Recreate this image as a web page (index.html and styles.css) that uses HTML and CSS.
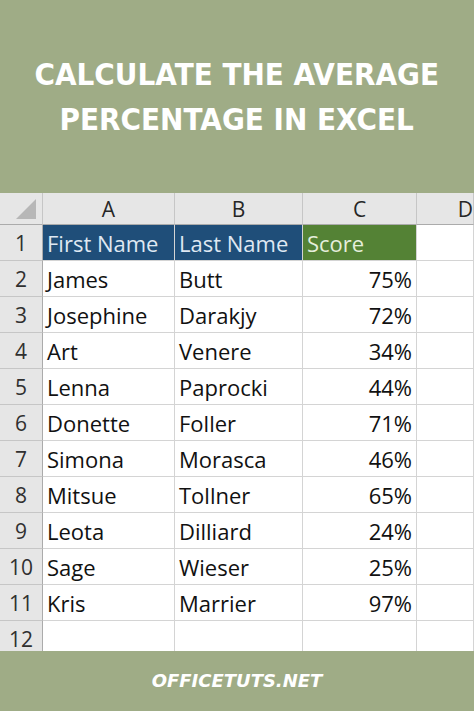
FILE: index.html
```html
<!DOCTYPE html>
<html>
<head>
<meta charset="utf-8">
<link rel="stylesheet" href="styles.css">
</head>
<body>
<div class="page">
  <header class="banner">
    <h1 class="title">CALCULATE THE AVERAGE<br>PERCENTAGE IN EXCEL</h1>
  </header>
  <div class="sheet">
    <div class="corner"><span class="tri"></span></div>
    <div class="colh">A</div>
    <div class="colh">B</div>
    <div class="colh">C</div>
    <div class="colh last">D</div>

    <div class="rowh">1</div>
    <div class="cell hb">First Name</div>
    <div class="cell hb">Last Name</div>
    <div class="cell hg">Score</div>
    <div class="cell"></div>

    <div class="rowh">2</div><div class="cell">James</div><div class="cell">Butt</div><div class="cell num">75%</div><div class="cell"></div>
    <div class="rowh">3</div><div class="cell">Josephine</div><div class="cell">Darakjy</div><div class="cell num">72%</div><div class="cell"></div>
    <div class="rowh">4</div><div class="cell">Art</div><div class="cell">Venere</div><div class="cell num">34%</div><div class="cell"></div>
    <div class="rowh">5</div><div class="cell">Lenna</div><div class="cell">Paprocki</div><div class="cell num">44%</div><div class="cell"></div>
    <div class="rowh">6</div><div class="cell">Donette</div><div class="cell">Foller</div><div class="cell num">71%</div><div class="cell"></div>
    <div class="rowh">7</div><div class="cell">Simona</div><div class="cell">Morasca</div><div class="cell num">46%</div><div class="cell"></div>
    <div class="rowh">8</div><div class="cell">Mitsue</div><div class="cell">Tollner</div><div class="cell num">65%</div><div class="cell"></div>
    <div class="rowh">9</div><div class="cell">Leota</div><div class="cell">Dilliard</div><div class="cell num">24%</div><div class="cell"></div>
    <div class="rowh">10</div><div class="cell">Sage</div><div class="cell">Wieser</div><div class="cell num">25%</div><div class="cell"></div>
    <div class="rowh">11</div><div class="cell">Kris</div><div class="cell">Marrier</div><div class="cell num">97%</div><div class="cell"></div>
    <div class="rowh">12</div><div class="cell"></div><div class="cell"></div><div class="cell"></div><div class="cell"></div>
  </div>
  <footer class="foot">OFFICETUTS.NET</footer>
</div>
</body>
</html>
```
FILE: styles.css
```css
* { box-sizing: border-box; margin: 0; padding: 0; }
html, body { width: 474px; height: 711px; overflow: hidden; background: #9fac86; }
.page { width: 474px; height: 711px; display: flex; flex-direction: column; }
.banner {
  height: 193px;
  background: #9fac86;
  display: flex;
  align-items: flex-start;
  justify-content: center;
  padding-top: 52px;
}
.title {
  font-family: "DejaVu Sans", sans-serif;
  font-weight: bold;
  font-size: 31px;
  line-height: 45px;
  color: #ffffff;
  text-align: center;
  transform: scaleX(0.9);
  white-space: nowrap;
}
.sheet {
  height: 458px;
  overflow: hidden;
  background: #ffffff;
  display: grid;
  grid-template-columns: 43px 132px 128px 114px 1fr;
  grid-template-rows: 32px repeat(11, 36px) 36px;
  font-family: "Open Sans", sans-serif;
  font-size: 22px;
  color: #111111;
}
.corner {
  background: #e6e6e6;
  border-right: 1px solid #c6c6c6;
  border-bottom: 1px solid #ababab;
  position: relative;
}
.tri {
  position: absolute;
  right: 6px;
  bottom: 5px;
  width: 0; height: 0;
  border-left: 20px solid transparent;
  border-bottom: 20px solid #b7b7b7;
}
.colh {
  background: #e6e6e6;
  border-right: 1px solid #c6c6c6;
  border-bottom: 1px solid #ababab;
  display: flex;
  align-items: center;
  justify-content: center;
  color: #262626;
  font-size: 21px;
}
.colh.last { justify-content: flex-end; overflow: hidden; }
.rowh {
  background: #e6e6e6;
  border-right: 1px solid #ababab;
  border-bottom: 1px solid #c6c6c6;
  display: flex;
  align-items: center;
  justify-content: center;
  color: #303030;
  font-size: 21px;
}
.cell {
  border-right: 1px solid #d4d4d4;
  border-bottom: 1px solid #d4d4d4;
  display: flex;
  align-items: center;
  padding-left: 4px;
  white-space: nowrap;
  overflow: hidden;
}
.cell.num { justify-content: flex-end; padding-right: 4px; }
.cell.hb { background: #1f4e79; color: #dfe8f2; }
.cell.hg { background: #548235; color: #e5eedc; }
.foot {
  flex: 1;
  background: #9fac86;
  color: #ffffff;
  font-family: "DejaVu Sans", sans-serif;
  font-weight: bold;
  font-style: italic;
  font-size: 18px;
  display: flex;
  align-items: center;
  justify-content: center;
  padding-bottom: 2px;
}
```
